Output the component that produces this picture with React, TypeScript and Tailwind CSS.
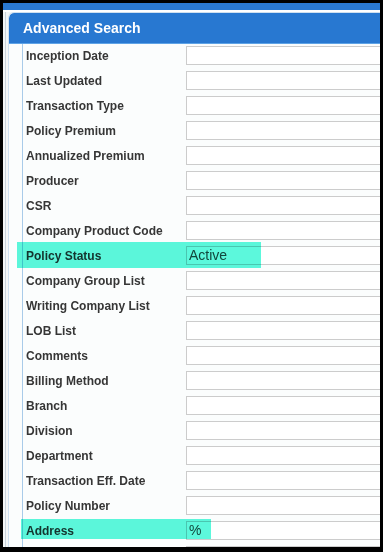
import React from "react";

// Search fields in the advanced search panel
const fields: { label: string; value?: string; mark?: "status" | "address" }[] = [
  { label: "Inception Date" },
  { label: "Last Updated" },
  { label: "Transaction Type" },
  { label: "Policy Premium" },
  { label: "Annualized Premium" },
  { label: "Producer" },
  { label: "CSR" },
  { label: "Company Product Code" },
  { label: "Policy Status", value: "Active", mark: "status" },
  { label: "Company Group List" },
  { label: "Writing Company List" },
  { label: "LOB List" },
  { label: "Comments" },
  { label: "Billing Method" },
  { label: "Branch" },
  { label: "Division" },
  { label: "Department" },
  { label: "Transaction Eff. Date" },
  { label: "Policy Number" },
  { label: "Address", value: "%", mark: "address" },
  { label: "" },
];

const App: React.FC = () => {
  return (
    <div
      className="w-[383px] h-[552px] bg-black pt-[3px] pl-[3px] pr-[3px] pb-[5px]"
      style={{ fontFamily: '"Liberation Sans", Arial, sans-serif' }}
    >
      <div className="h-full w-full flex flex-col overflow-hidden bg-[#f3f6f7]">
        {/* window behind the dialog */}
        <div className="h-[7px] shrink-0 bg-[#2a79d1]" />
        <div className="h-[2px] shrink-0 bg-white" />

        <div className="flex flex-1 min-h-0">
          <div className="w-[5px] shrink-0 flex">
            <div className="ml-[2px] w-px bg-[#c9d3dc]" />
          </div>

          <div className="flex-1 min-w-0 flex flex-col rounded-tl-[6px] border-t border-l border-[#cfe0f0] bg-[#fbfdfd] overflow-hidden">
            <div className="h-[31px] shrink-0 flex items-center pl-[14px] bg-[#2878d1] rounded-tl-[5px] border-b border-[#5ea3e6] text-white font-bold text-[14px]">
              Advanced Search
            </div>

            <div className="flex flex-1 min-h-0">
              <div className="w-[13px] shrink-0" />
              <div className="flex-1 min-w-0 border-l border-[#a9cbe9] flex flex-col">
                {fields.map((f, i) => (
                  <div key={i} className="relative h-[25px] shrink-0 flex items-center pb-[2px]">
                    {f.mark === "status" && (
                      <div className="absolute left-[-6px] top-[-2px] w-[244px] h-[26px] bg-[#5cf8dc] mix-blend-multiply z-10" />
                    )}
                    {f.mark === "address" && (
                      <div className="absolute left-[-2px] top-0 w-[190px] h-[20px] bg-[#5cf8dc] mix-blend-multiply z-10" />
                    )}
                    <div className="w-[163px] shrink-0 pl-[3px] text-[12px] font-bold text-[#363636] whitespace-nowrap">
                      {f.label}
                    </div>
                    <div className="w-[260px] shrink-0 h-[19px] border border-[#cccccc] bg-white flex items-center pl-[2px] text-[14px] text-[#2d4a47]">
                      {f.value}
                    </div>
                  </div>
                ))}
              </div>
            </div>
          </div>
        </div>
      </div>
    </div>
  );
};

export default App;
